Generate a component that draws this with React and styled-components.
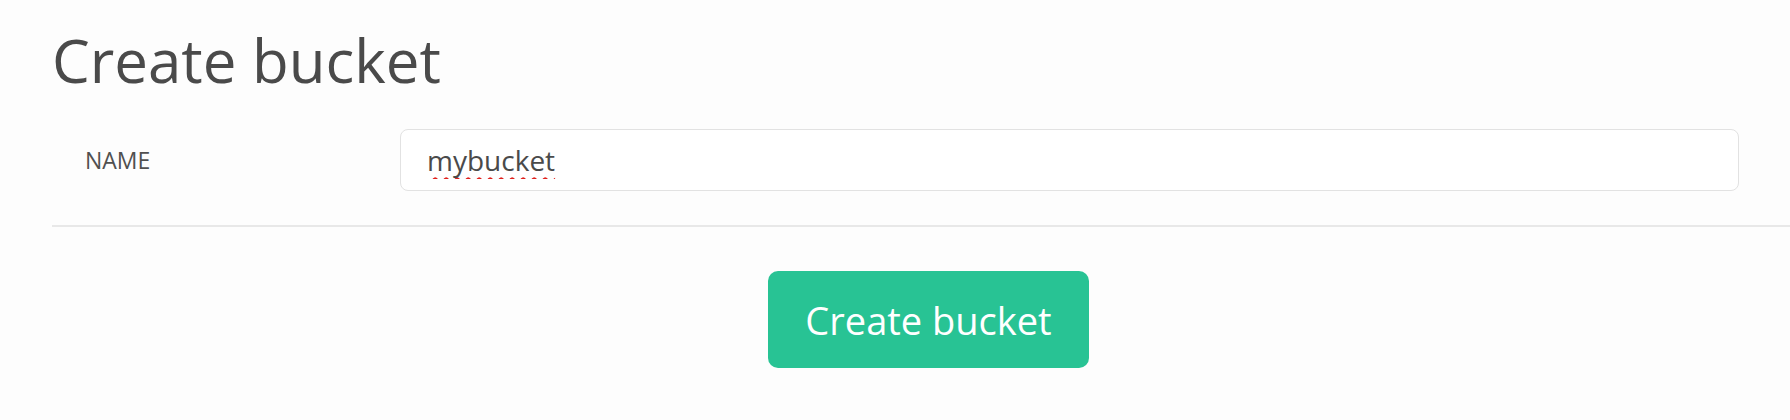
import styled, { createGlobalStyle } from "styled-components";

const GlobalStyle = createGlobalStyle`
  html, body {
    margin: 0;
    padding: 0;
    background: #fdfdfd;
    font-family: "Open Sans", "Noto Sans", sans-serif;
  }
`;

const Page = styled.div`
  padding-left: 52px;
`;

const Title = styled.h1`
  margin: 24px 0 0;
  font-size: 60px;
  line-height: 72px;
  font-weight: 400;
  color: #4a4a4a;
`;

const FieldRow = styled.div`
  display: flex;
  align-items: center;
  margin-top: 33px;
  padding: 0 51px 34px 33px;
  border-bottom: 2px solid #e8e8e8;
`;

const Label = styled.label`
  width: 315px;
  flex-shrink: 0;
  font-size: 23px;
  color: #505050;
  text-transform: uppercase;
`;

const Input = styled.input`
  flex: 1;
  height: 62px;
  box-sizing: border-box;
  border: 1px solid #e2e2e2;
  border-radius: 8px;
  background: #fff;
  padding: 0 26px;
  font-family: "Open Sans", "Noto Sans", sans-serif;
  font-size: 28px;
  line-height: 48px;
  color: #4a4a4a;
  outline: none;
  text-decoration: underline wavy #e0201c;
  text-decoration-thickness: 1.5px;
  text-decoration-skip-ink: none;
  text-underline-offset: 6px;
`;

const Actions = styled.div`
  display: flex;
  justify-content: center;
  padding: 44px 0 0 15px;
`;

const Button = styled.button`
  width: 321px;
  height: 97px;
  border: none;
  border-radius: 10px;
  background: #28c394;
  color: #fff;
  font-family: "Open Sans", "Noto Sans", sans-serif;
  font-size: 38px;
  cursor: pointer;
  &:hover {
    background: #22ad83;
  }
`;

export default function App() {
  return (
    <>
      <GlobalStyle />
      <Page>
        <Title>Create bucket</Title>
        <FieldRow>
          <Label htmlFor="bucket-name">Name</Label>
          <Input id="bucket-name" defaultValue="mybucket" />
        </FieldRow>
        <Actions>
          <Button>Create bucket</Button>
        </Actions>
      </Page>
    </>
  );
}
